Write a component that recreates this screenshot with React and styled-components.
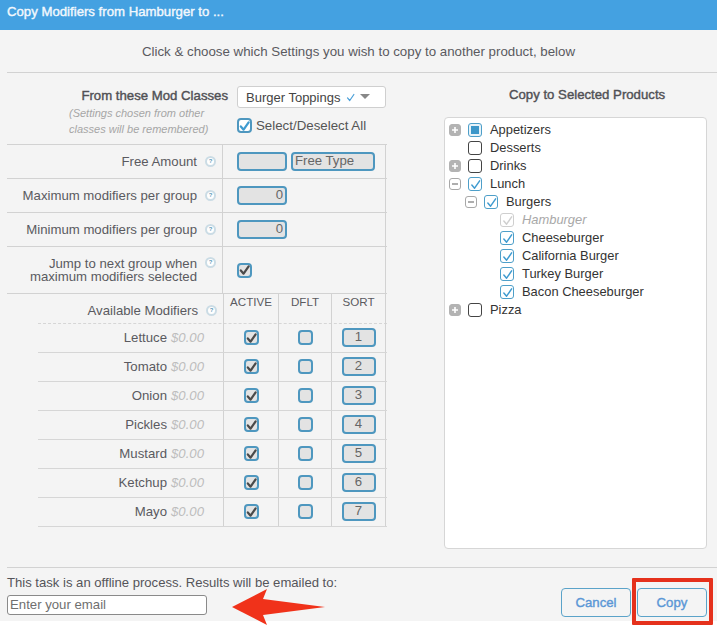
import React from "react";
import styled, { createGlobalStyle, css } from "styled-components";

const Global = createGlobalStyle`
  html, body { margin: 0; padding: 0; background: #fff; overflow: hidden; }
  * { box-sizing: border-box; }
  body { font-family: "Liberation Sans", Arial, sans-serif; font-size: 13.2px; color: #555; }
`;

const heavy = css`
  font-weight: normal;
  -webkit-text-stroke: 0.4px currentColor;
`;

const Page = styled.div`
  position: relative;
  width: 717px;
  height: 626px;
  background: #fff;
`;
const Dialog = styled.div`
  height: 621px;
  background: #f4f4f4;
  display: flex;
  flex-direction: column;
`;
const Header = styled.div`
  height: 30px;
  flex: none;
  background: #44a1e1;
  color: #f2f8fd;
  ${heavy}
  font-size: 13.2px;
  line-height: 24px;
  padding-left: 7px;
`;
const Intro = styled.div`
  height: 43px;
  flex: none;
  margin-left: 7px;
  padding: 14px 7px 0 0;
  line-height: 16px;
  text-align: center;
  font-size: 13.3px;
  border-bottom: 1px solid #d2d2d2;
  color: #5a5a5f;
`;
const Main = styled.div`
  height: 494px;
  flex: none;
  display: flex;
`;
const LeftColumn = styled.div`
  width: 380px;
  margin-left: 7px;
  flex: none;
`;
const TopBlock = styled.div`
  height: 71px;
  display: flex;
`;
const TopLabels = styled.div`
  width: 230px;
  flex: none;
  padding-top: 14px;
`;
const TopTitle = styled.div`
  ${heavy}
  line-height: 18px;
  text-align: right;
  padding-right: 9px;
  color: #505055;
`;
const TopNote = styled.div`
  margin-left: 62px;
  font-style: italic;
  font-size: 11px;
  line-height: 16px;
  color: #a6a6a6;
`;
const TopControls = styled.div`
  padding-top: 13px;
  display: flex;
  flex-direction: column;
`;
const Dropdown = styled.div`
  width: 149px;
  height: 22px;
  background: #fff;
  border: 1px solid #cfcfcf;
  border-radius: 3px;
  display: flex;
  align-items: center;
  padding-left: 8px;
  font-size: 13px;
  color: #444;
`;
const DropLabel = styled.span`
  flex: 1;
`;
const Caret = styled.span`
  width: 0;
  height: 0;
  margin: 0 15px 2px 5px;
  border-left: 5px solid transparent;
  border-right: 5px solid transparent;
  border-top: 5px solid #888;
`;
const SelectAll = styled.div`
  margin-top: 10px;
  display: flex;
  align-items: center;
  gap: 4px;
  font-size: 13.3px;
  color: #555;
`;
const Table = styled.div`
  border-top: 1px solid #d2d2d2;
`;
const Row = styled.div`
  height: ${(p) => p.$h || 34}px;
  display: grid;
  grid-template-columns: 216px 163px;
  border-bottom: 1px solid #d2d2d2;
`;
const LabelCell = styled.div`
  display: flex;
  justify-content: flex-end;
  align-items: ${(p) => (p.$top ? "flex-start" : "center")};
  padding-top: ${(p) => (p.$top ? "10px" : "0")};
  padding-right: 6px;
  gap: 8px;
  border-right: 1px solid #d2d2d2;
  line-height: 13px;
  text-align: right;
  color: #5a5a60;
`;
const ValueCell = styled.div`
  display: flex;
  align-items: center;
  gap: 4px;
  padding-left: 14px;
  border-right: 1px solid #d2d2d2;
`;
const Help = styled.span`
  width: 11px;
  height: 11px;
  flex: none;
  border-radius: 50%;
  border: 2px solid #cbdce5;
  background: #fff;
  color: #5d9ab8;
  font-size: 6px;
  font-weight: bold;
  line-height: 7px;
  text-align: center;
`;
const GreyInput = styled.input`
  width: ${(p) => p.$w}px;
  height: 19px;
  background: #e3e3e3;
  border: 2px solid #4e97bf;
  border-radius: 4px;
  font: 13.2px "Liberation Sans", Arial, sans-serif;
  color: #666;
  padding: 0 2px 2px 2px;
  text-align: ${(p) => p.$align || "left"};
  outline: none;
`;
const Mark = styled.span`
  width: 15px;
  height: 15px;
  flex: none;
  display: inline-flex;
  align-items: center;
  justify-content: center;
  background: ${(p) => (p.$light ? "#fff" : "#e3e3e3")};
  border: 2px solid #4e97bf;
  border-radius: 4px;
`;
const ModGrid = styled.div`
  margin-left: 31px;
  height: ${(p) => p.$h}px;
  display: grid;
  grid-template-columns: 185px 55px 53px 55px;
  border-bottom: 1px ${(p) => (p.$dashed ? "dashed" : "solid")} #d6d6d6;
`;
const ModLabel = styled.div`
  display: flex;
  justify-content: flex-end;
  align-items: center;
  padding: 0 19px 2px 0;
  gap: 4px;
  color: #5a5a60;
`;
const ModHeadLabel = styled.div`
  display: flex;
  justify-content: flex-end;
  align-items: center;
  padding: 4px 6px 0 0;
  gap: 8px;
  color: #5a5a60;
`;
const Price = styled.span`
  font-style: italic;
  color: #bdbdbd;
`;
const HeadCell = styled.div`
  border-left: 1px solid #d2d2d2;
  border-right: ${(p) => (p.$last ? "1px solid #d2d2d2" : "0")};
  text-align: center;
  font-size: 11.6px;
  line-height: 14px;
  padding-top: 1px;
  color: #5a5a60;
  margin-bottom: -1px;
`;
const ModCell = styled.div`
  border-left: 1px solid #d2d2d2;
  border-right: ${(p) => (p.$last ? "1px solid #d2d2d2" : "0")};
  display: flex;
  align-items: center;
  justify-content: center;
  padding-bottom: 1px;
`;
const RightColumn = styled.div`
  margin-left: 57px;
  width: 263px;
  flex: none;
  padding-top: 13px;
`;
const TreeTitle = styled.div`
  ${heavy}
  line-height: 18px;
  margin-bottom: 13px;
  padding-left: 65px;
  color: #505055;
  white-space: nowrap;
`;
const TreePanel = styled.div`
  height: 432px;
  background: #fff;
  border: 1px solid #d6d6d6;
  border-radius: 4px;
  padding: 3px 0 0 4px;
`;
const TreeRow = styled.div`
  height: 18px;
  display: flex;
  align-items: center;
  padding-left: ${(p) => p.$level * 16}px;
  color: ${(p) => (p.$off ? "#a8a8a8" : "#333")};
  font-style: ${(p) => (p.$off ? "italic" : "normal")};
  font-size: 12.9px;
`;
const TreeLabel = styled.span`
  margin-top: -1px;
`;
const Expander = styled.span`
  width: 12px;
  height: 12px;
  flex: none;
  margin-right: 7px;
  border-radius: 3px;
  display: inline-flex;
  align-items: center;
  justify-content: center;
  visibility: ${(p) => (p.$kind ? "visible" : "hidden")};
  background: ${(p) => (p.$kind === "plus" ? "#b3b3b3" : "#fff")};
  border: 1px solid ${(p) => (p.$kind === "plus" ? "#b3b3b3" : "#a8a8a8")};
`;
const TreeBox = styled.span`
  width: 14px;
  height: 14px;
  flex: none;
  margin-right: 8px;
  border-radius: 3px;
  display: inline-flex;
  align-items: center;
  justify-content: center;
  background: ${(p) => (p.$state === "partial" ? "#e8f3f9" : "#fff")};
  border: 1px solid
    ${(p) =>
      p.$state === "none"
        ? "#444"
        : p.$state === "disabled"
          ? "#cfcfcf"
          : "#4e9fc9"};
`;
const Partial = styled.span`
  width: 8px;
  height: 8px;
  background: #3d97c9;
`;
const Footer = styled.div`
  height: 54px;
  flex: none;
  margin-left: 7px;
  border-top: 1px solid #d2d2d2;
  display: flex;
  justify-content: space-between;
  padding-right: 10px;
`;
const EmailBlock = styled.div`
  padding-top: 7px;
`;
const EmailNote = styled.div`
  line-height: 15px;
  margin-bottom: 5px;
  font-size: 13.1px;
  color: #55555a;
  white-space: nowrap;
`;
const EmailInput = styled.input`
  display: block;
  width: 200px;
  height: 20px;
  background: #fff;
  border: 1px solid #8a8a8a;
  border-radius: 3px;
  padding: 0 3px 1px 2px;
  font: 13.2px "Liberation Sans", Arial, sans-serif;
  outline: none;
  &::placeholder { color: #6f6f6f; opacity: 1; }
`;
const Buttons = styled.div`
  display: flex;
  gap: 6px;
  padding-top: 20px;
`;
const Button = styled.button`
  width: 70px;
  height: 29px;
  background: transparent;
  border: 1px solid #5ba3c9;
  border-radius: 4px;
  color: #5b97d6;
  font: 13.2px "Liberation Sans", Arial, sans-serif;
  ${heavy}
  padding: 0;
`;
const Highlight = styled.div`
  position: absolute;
  left: 632px;
  top: 578px;
  width: 81px;
  height: 47px;
  border: 4px solid #e5311c;
  border-radius: 1px;
  pointer-events: none;
`;
const ArrowSvg = styled.svg`
  position: absolute;
  left: 228px;
  top: 585px;
`;

const Check = ({ color = "#4a4a4a", size = 12, w = 2.4 }) => (
  <svg width={size} height={size} viewBox="0 0 12 12" fill="none">
    <path d="M2 6.5 L5 10 L10.5 2" stroke={color} strokeWidth={w} strokeLinecap="round" strokeLinejoin="round" />
  </svg>
);

const tree = [
  { level: 0, exp: "plus", state: "partial", label: "Appetizers" },
  { level: 0, state: "none", label: "Desserts" },
  { level: 0, exp: "plus", state: "none", label: "Drinks" },
  { level: 0, exp: "minus", state: "on", label: "Lunch" },
  { level: 1, exp: "minus", state: "on", label: "Burgers" },
  { level: 2, state: "disabled", label: "Hamburger" },
  { level: 2, state: "on", label: "Cheeseburger" },
  { level: 2, state: "on", label: "California Burger" },
  { level: 2, state: "on", label: "Turkey Burger" },
  { level: 2, state: "on", label: "Bacon Cheeseburger" },
  { level: 0, exp: "plus", state: "none", label: "Pizza" },
];

const mods = ["Lettuce", "Tomato", "Onion", "Pickles", "Mustard", "Ketchup", "Mayo"];

const ExpGlyph = ({ kind }) => (
  <svg width="8" height="8" viewBox="0 0 8 8">
    <path
      d={kind === "plus" ? "M4 1V7M1 4H7" : "M1 4H7"}
      stroke={kind === "plus" ? "#fff" : "#9a9a9a"}
      strokeWidth="1.6"
    />
  </svg>
);

export default function App() {
  return (
    <Page>
      <Global />
      <Dialog>
        <Header>Copy Modifiers from Hamburger to ...</Header>
        <Intro>Click &amp; choose which Settings you wish to copy to another product, below</Intro>
        <Main>
          <LeftColumn>
            <TopBlock>
              <TopLabels>
                <TopTitle>From these Mod Classes</TopTitle>
                <TopNote>(Settings chosen from other</TopNote>
                <TopNote>classes will be remembered)</TopNote>
              </TopLabels>
              <TopControls>
                <Dropdown>
                  <DropLabel>Burger Toppings</DropLabel>
                  <Check color="#4a9fd8" size={9} w={1.6} />
                  <Caret />
                </Dropdown>
                <SelectAll>
                  <Mark $light><Check color="#3f9bd0" size={12} /></Mark>
                  Select/Deselect All
                </SelectAll>
              </TopControls>
            </TopBlock>
            <Table>
              <Row>
                <LabelCell>Free Amount <Help>?</Help></LabelCell>
                <ValueCell>
                  <GreyInput $w={50} readOnly defaultValue="" />
                  <GreyInput $w={84} readOnly defaultValue="Free Type" />
                </ValueCell>
              </Row>
              <Row>
                <LabelCell>Maximum modifiers per group <Help>?</Help></LabelCell>
                <ValueCell><GreyInput $w={50} $align="right" readOnly defaultValue="0" /></ValueCell>
              </Row>
              <Row>
                <LabelCell>Minimum modifiers per group <Help>?</Help></LabelCell>
                <ValueCell><GreyInput $w={50} $align="right" readOnly defaultValue="0" /></ValueCell>
              </Row>
              <Row $h={47}>
                <LabelCell $top>
                  <span>Jump to next group when<br />maximum modifiers selected</span>
                  <Help>?</Help>
                </LabelCell>
                <ValueCell><Mark><Check /></Mark></ValueCell>
              </Row>
              <ModGrid $h={30} $dashed>
                <ModHeadLabel>Available Modifiers <Help>?</Help></ModHeadLabel>
                <HeadCell>ACTIVE</HeadCell>
                <HeadCell>DFLT</HeadCell>
                <HeadCell $last>SORT</HeadCell>
              </ModGrid>
              {mods.map((m, i) => (
                <ModGrid key={m} $h={29}>
                  <ModLabel>{m} <Price>$0.00</Price></ModLabel>
                  <ModCell><Mark><Check /></Mark></ModCell>
                  <ModCell><Mark /></ModCell>
                  <ModCell $last>
                    <GreyInput $w={34} $align="center" readOnly defaultValue={String(i + 1)} />
                  </ModCell>
                </ModGrid>
              ))}
            </Table>
          </LeftColumn>
          <RightColumn>
            <TreeTitle>Copy to Selected Products</TreeTitle>
            <TreePanel>
              {tree.map((t) => (
                <TreeRow key={t.label} $level={t.level} $off={t.state === "disabled"}>
                  <Expander $kind={t.exp}>{t.exp && <ExpGlyph kind={t.exp} />}</Expander>
                  <TreeBox $state={t.state}>
                    {t.state === "partial" && <Partial />}
                    {t.state === "on" && <Check color="#3f9bd0" size={11} w={1.6} />}
                    {t.state === "disabled" && <Check color="#cfcfcf" size={11} w={1.6} />}
                  </TreeBox>
                  <TreeLabel>{t.label}</TreeLabel>
                </TreeRow>
              ))}
            </TreePanel>
          </RightColumn>
        </Main>
        <Footer>
          <EmailBlock>
            <EmailNote>This task is an offline process. Results will be emailed to:</EmailNote>
            <EmailInput placeholder="Enter your email" />
          </EmailBlock>
          <Buttons>
            <Button>Cancel</Button>
            <Button>Copy</Button>
          </Buttons>
        </Footer>
      </Dialog>
      <ArrowSvg width="100" height="42" viewBox="0 0 100 42">
        <path d="M4 22 L39 4 L35 14 L97 22 L35 30 L39 40 Z" fill="#f0321a" />
      </ArrowSvg>
      <Highlight />
    </Page>
  );
}
